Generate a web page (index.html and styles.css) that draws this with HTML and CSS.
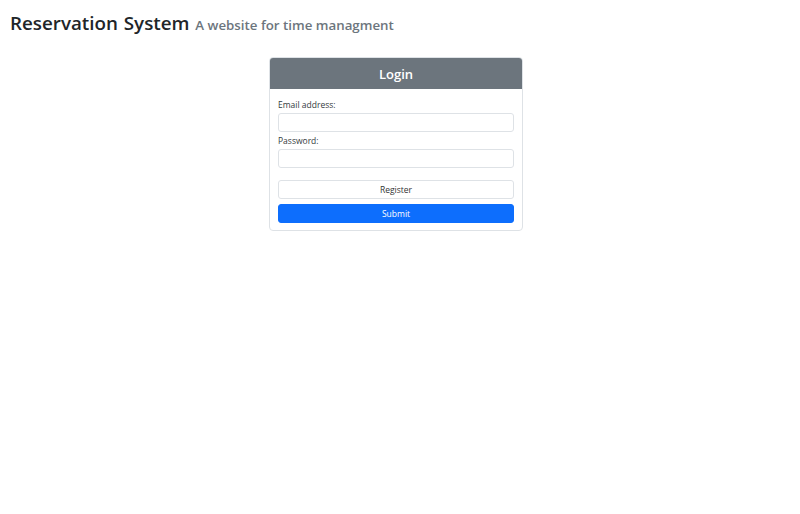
FILE: index.html
```html
<!DOCTYPE html>
<html lang="en">
<head>
<meta charset="utf-8">
<title>Reservation System</title>
<link rel="stylesheet" href="styles.css">
</head>
<body>
<header class="page-header">
  <h1 class="title">Reservation System <small class="subtitle">A website for time managment</small></h1>
</header>
<main class="main">
  <div class="card">
    <div class="card-header">Login</div>
    <form class="card-body">
      <label class="label" for="email">Email address:</label>
      <input class="input" id="email" type="email">
      <label class="label" for="password">Password:</label>
      <input class="input" id="password" type="password">
      <button class="btn btn-light" type="button">Register</button>
      <button class="btn btn-primary" type="submit">Submit</button>
    </form>
  </div>
</main>
</body>
</html>
```
FILE: styles.css
```css
html, body {
  margin: 0;
  padding: 0;
  background: #fff;
  font-family: "Open Sans", "Noto Sans", "Liberation Sans", sans-serif;
  color: #212529;
}
.page-header {
  padding: 9px 10px 0;
}
.title {
  margin: 0;
  font-size: 18.8px;
  font-weight: 600;
  line-height: 28px;
  color: #212529;
  word-spacing: 1px;
}
.subtitle {
  font-size: 13.3px;
  font-weight: 600;
  color: #6c757d;
  word-spacing: 0;
}
.main {
  display: flex;
  justify-content: center;
  padding: 18px 8px 0 0;
}
.card {
  width: 252px;
  border: 1px solid #dee2e6;
  border-radius: 4px;
  overflow: hidden;
}
.card-header {
  height: 31px;
  background: #6c757d;
  color: #fff;
  font-size: 13px;
  font-weight: 600;
  display: flex;
  align-items: center;
  justify-content: center;
}
.card-body {
  display: flex;
  flex-direction: column;
  padding: 9px 8px 7px;
  margin: 0;
}
.label {
  font-size: 8.5px;
  line-height: 14px;
  color: #343a40;
  margin-bottom: 1px;
}
.input {
  box-sizing: border-box;
  height: 19px;
  border: 1px solid #dee2e6;
  border-radius: 3px;
  margin: 0 0 2px;
  padding: 0 4px;
  font: inherit;
  font-size: 8.5px;
}
.btn {
  box-sizing: border-box;
  height: 19px;
  border-radius: 3px;
  font-family: inherit;
  font-size: 8.5px;
  padding: 0;
  cursor: pointer;
}
.btn-light {
  margin-top: 10px;
  background: #fff;
  border: 1px solid #dee2e6;
  color: #333;
}
.btn-primary {
  margin-top: 5px;
  background: #0d6efd;
  border: 1px solid #0d6efd;
  color: #fff;
}
```
